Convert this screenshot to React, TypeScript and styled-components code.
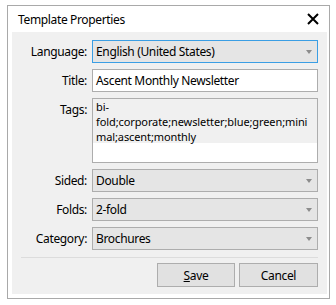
import React from "react";
import styled, { createGlobalStyle } from "styled-components";

const GlobalStyle = createGlobalStyle`
  html, body {
    margin: 0;
    padding: 0;
    background: #ffffff;
  }
  body {
    font-family: "Noto Sans", "Segoe UI", sans-serif;
    font-size: 12px;
    letter-spacing: -0.35px;
    color: #000;
  }
`;

const Window = styled.div`
  margin: 5px 0 0 7px;
  width: 323px;
  height: 294px;
  box-sizing: border-box;
  border: 1px solid #a9a9a9;
  background: #ffffff;
  display: flex;
  flex-direction: column;
  padding: 0 2px 4px 4px;
`;

const TitleBar = styled.div`
  height: 26px;
  display: flex;
  align-items: center;
  justify-content: space-between;
  padding: 0 7px 0 6px;
  flex-shrink: 0;
`;

const TitleText = styled.span`
  font-size: 12px;
  color: #000;
  padding-top: 1px;
`;

const CloseButton = styled.button`
  border: none;
  background: transparent;
  padding: 0;
  width: 14px;
  height: 14px;
  display: flex;
  align-items: center;
  justify-content: center;
  cursor: pointer;
`;

const Content = styled.div`
  flex: 1;
  background: #f0f0f0;
  padding: 8px 9px 7px 0;
  display: flex;
  flex-direction: column;
`;

const Form = styled.div`
  display: grid;
  grid-template-columns: 75px 226px;
  column-gap: 5px;
  row-gap: 6px;
  align-items: start;
`;

const Label = styled.label`
  text-align: right;
  line-height: 23px;
  height: 23px;
  white-space: nowrap;
`;

const Select = styled.div<{ $focused?: boolean }>`
  position: relative;
  height: 23px;
  box-sizing: border-box;
  border: 1px solid ${(p) => (p.$focused ? "#3a9ee4" : "#adadad")};
  background: #e5e5e5;
  padding: 0 20px 0 3px;
  line-height: 21px;
  white-space: nowrap;
  overflow: hidden;
`;

const Arrow = styled.span`
  position: absolute;
  right: 5px;
  top: 9px;
  width: 0;
  height: 0;
  border-left: 3.5px solid transparent;
  border-right: 3.5px solid transparent;
  border-top: 4px solid #8c8c8c;
`;

const TextInput = styled.div`
  height: 23px;
  box-sizing: border-box;
  border: 1px solid #adadad;
  background: #ffffff;
  padding: 0 3px;
  line-height: 21px;
  white-space: nowrap;
`;

const TagsBox = styled.div`
  height: 65px;
  box-sizing: border-box;
  border: 1px solid #adadad;
  background: #ffffff;
`;

const TagsText = styled.div`
  background: #f0f0f0;
  padding: 0 3px;
  height: 44px;
  box-sizing: border-box;
  font-size: 11px;
  letter-spacing: -0.1px;
`;

const TagLine = styled.div`
  height: 15px;
  line-height: 15px;
  white-space: nowrap;
`;

const Separator = styled.div`
  height: 1px;
  background: #dcdcdc;
  margin: 7px 0 0 9px;
`;

const ButtonRow = styled.div`
  display: flex;
  justify-content: flex-end;
  gap: 4px;
  margin-top: 5px;
`;

const Button = styled.button<{ $width: number }>`
  width: ${(p) => p.$width}px;
  height: 24px;
  box-sizing: border-box;
  border: 1px solid #adadad;
  background: #e1e1e1;
  font-family: inherit;
  font-size: 12px;
  letter-spacing: inherit;
  color: #000;
  padding: 0;
  cursor: pointer;
`;

const Mnemonic = styled.span`
  text-decoration: underline;
`;

function CloseIcon() {
  return (
    <svg width="12" height="12" viewBox="0 0 12 12">
      <path d="M1 1 L11 11 M11 1 L1 11" stroke="#000" strokeWidth="2" fill="none" />
    </svg>
  );
}

function Dropdown({ value, focused }: { value: string; focused?: boolean }) {
  return (
    <Select $focused={focused}>
      {value}
      <Arrow />
    </Select>
  );
}

const tagLines = ["bi-", "fold;corporate;newsletter;blue;green;mini", "mal;ascent;monthly"];

export default function App() {
  return (
    <>
      <GlobalStyle />
      <Window>
        <TitleBar>
          <TitleText>Template Properties</TitleText>
          <CloseButton aria-label="Close">
            <CloseIcon />
          </CloseButton>
        </TitleBar>
        <Content>
          <Form>
            <Label>Language:</Label>
            <Dropdown value="English (United States)" focused />

            <Label>Title:</Label>
            <TextInput>Ascent Monthly Newsletter</TextInput>

            <Label>Tags:</Label>
            <TagsBox>
              <TagsText>
                {tagLines.map((line) => (
                  <TagLine key={line}>{line}</TagLine>
                ))}
              </TagsText>
            </TagsBox>

            <Label>Sided:</Label>
            <Dropdown value="Double" />

            <Label>Folds:</Label>
            <Dropdown value="2-fold" />

            <Label>Category:</Label>
            <Dropdown value="Brochures" />
          </Form>
          <Separator />
          <ButtonRow>
            <Button $width={78}>
              <Mnemonic>S</Mnemonic>ave
            </Button>
            <Button $width={79}>Cancel</Button>
          </ButtonRow>
        </Content>
      </Window>
    </>
  );
}
